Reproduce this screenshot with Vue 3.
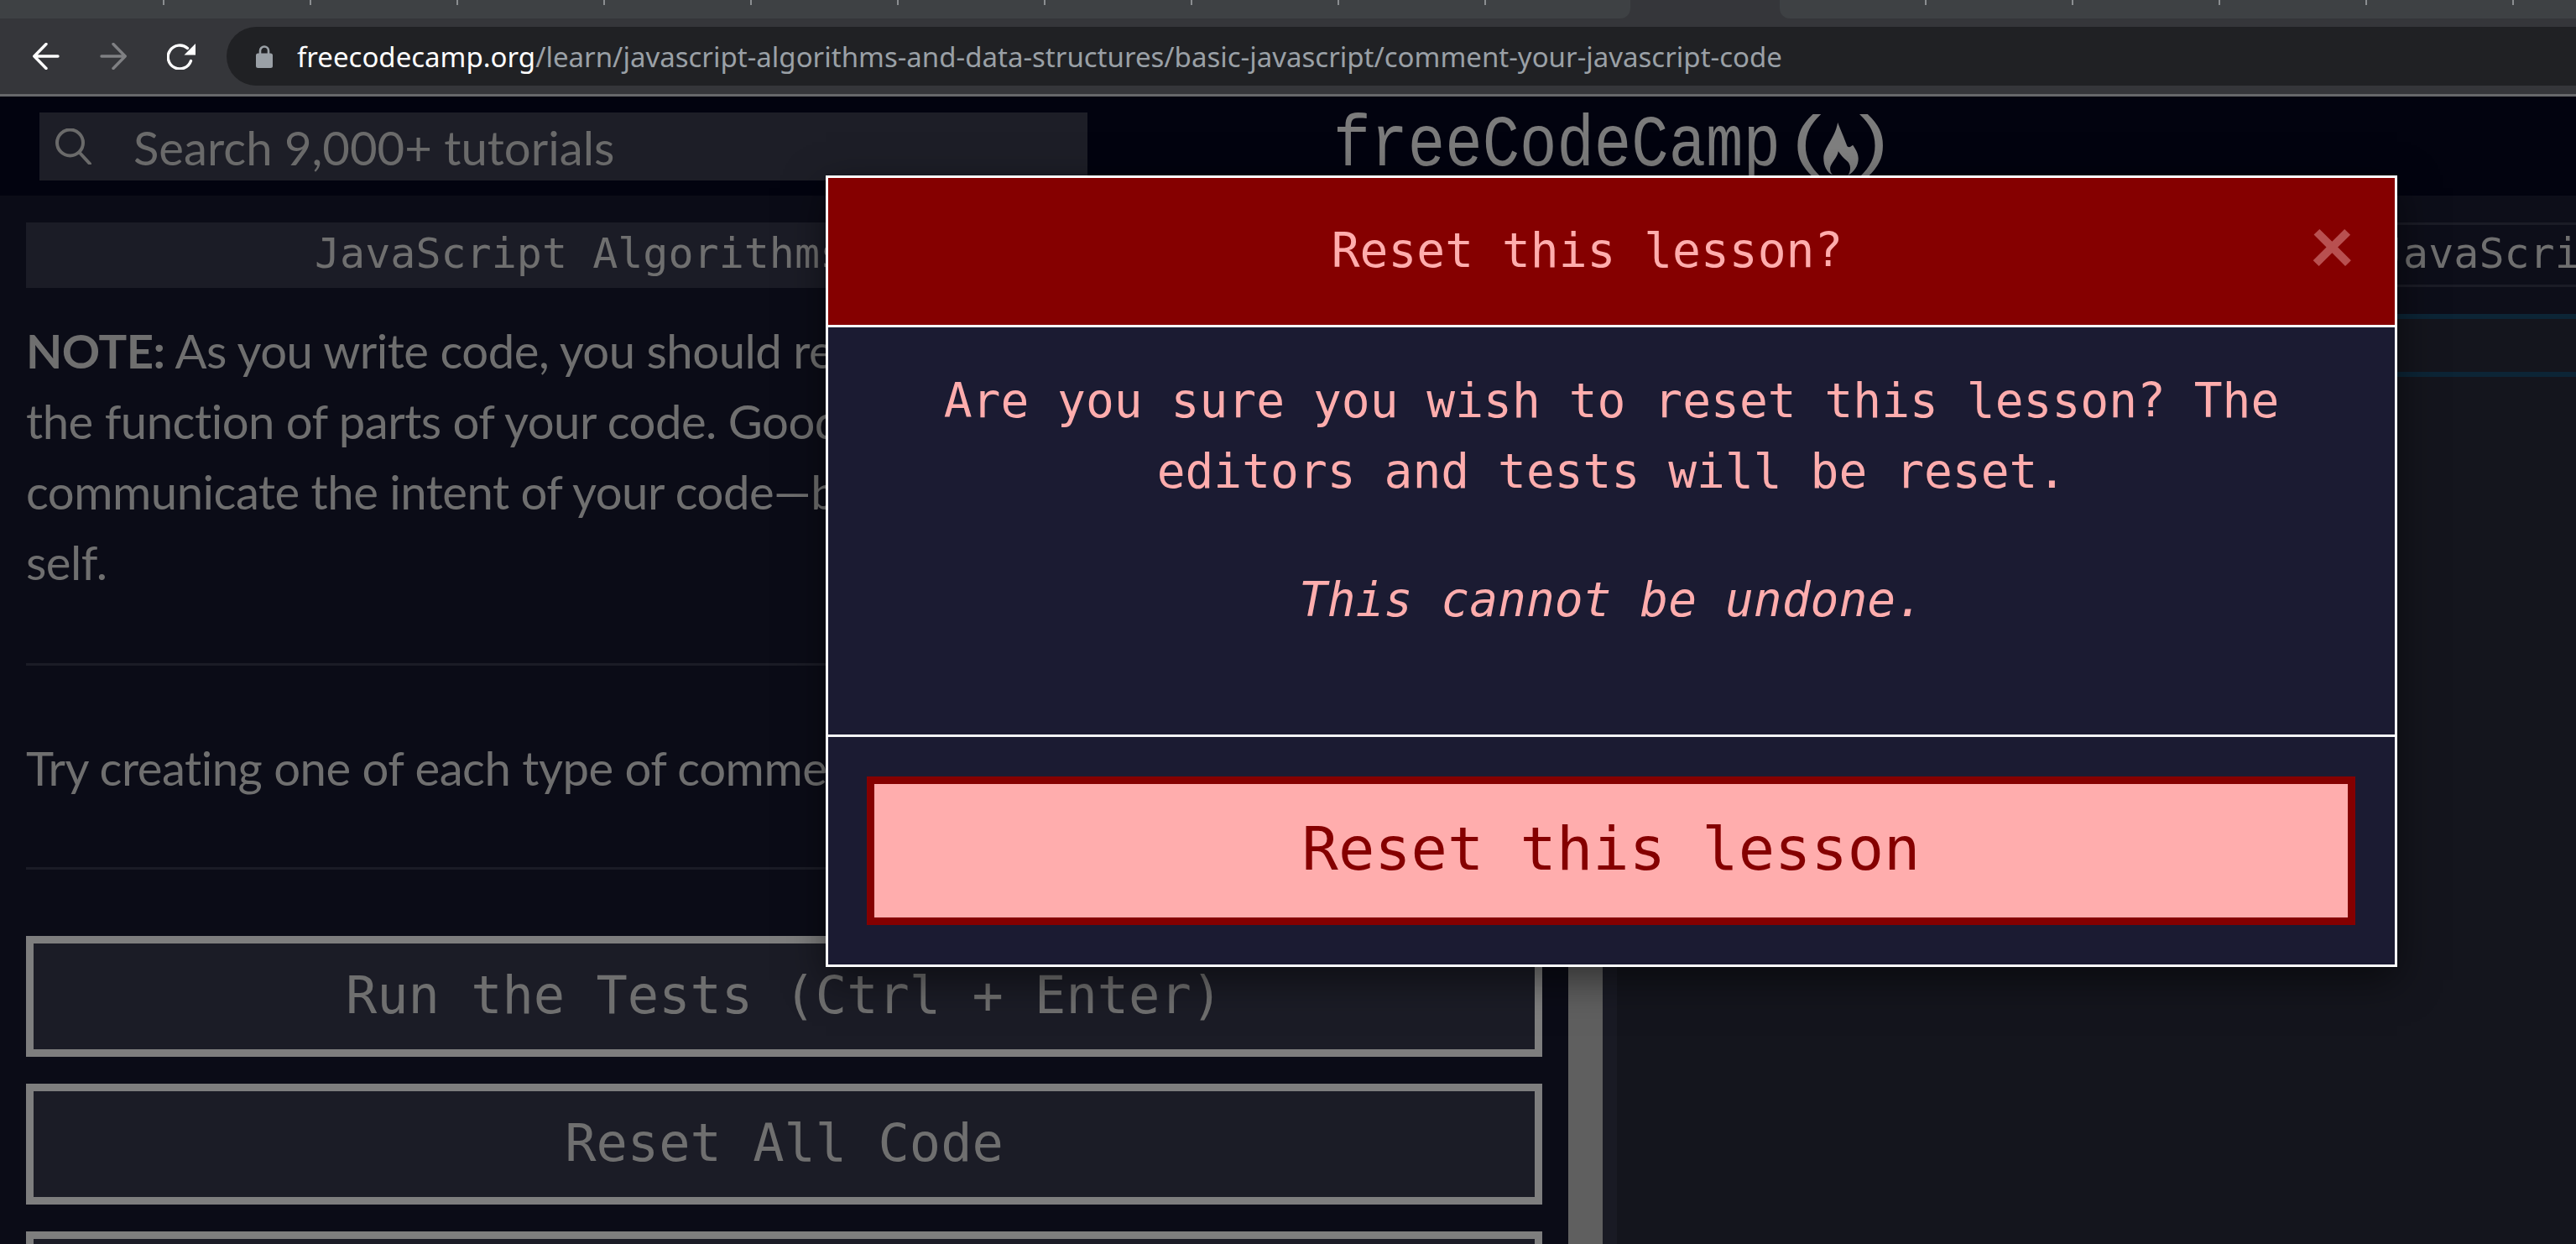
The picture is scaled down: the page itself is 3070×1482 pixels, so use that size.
<script setup>
const tabGroups = [
  { id: 'left', tabs: 11 },
  { id: 'right', tabs: 6 },
]
</script>

<template>
  <div class="screen">
    <!-- browser chrome -->
    <div class="tabstrip">
      <div v-for="group in tabGroups" :key="group.id" :class="['tab-group', group.id]">
        <span v-for="n in group.tabs" :key="n" class="tab"></span>
      </div>
    </div>
    <div class="toolbar">
      <svg class="nav-icon" width="32" height="32" viewBox="0 0 32 32" fill="none" stroke="#fff" stroke-width="3.4" stroke-linecap="round" stroke-linejoin="round">
        <path d="M16 1.5 1.8 16 16 30.5M2 16h28" />
      </svg>
      <svg class="nav-icon" width="32" height="32" viewBox="0 0 32 32" fill="none" stroke="#7f8083" stroke-width="3.4" stroke-linecap="round" stroke-linejoin="round">
        <path d="M16 1.5 30.2 16 16 30.5M30 16H2" />
      </svg>
      <svg class="nav-icon reload" width="34" height="32" viewBox="0 0 34 32">
        <path d="M28.5 21.5A14 14 0 1 1 24.5 6.5" fill="none" stroke="#fff" stroke-width="3.4" stroke-linecap="round" />
        <path d="M34 1v13.5H20.5z" fill="#fff" />
      </svg>
      <div class="address">
        <svg class="lock" width="20" height="27" viewBox="0 0 20 27">
          <path d="M5 11V6.5a5 5 0 0 1 10 0V11" fill="none" stroke="#9aa0a6" stroke-width="2.6" />
          <rect y="9.5" width="20" height="17.5" rx="2.5" fill="#9aa0a6" />
        </svg>
        <span class="url"><span class="host">freecodecamp.org</span>/learn/javascript-algorithms-and-data-structures/basic-javascript/comment-your-javascript-code</span>
      </div>
    </div>
    <div class="chrome-line"></div>

    <!-- freeCodeCamp nav -->
    <header class="nav">
      <div class="search">
        <svg width="43" height="43" viewBox="0 0 43 43" fill="none" stroke="#6a6a6a" stroke-width="4" stroke-linecap="round">
          <circle cx="17.5" cy="17" r="15.5" />
          <path d="M29 29 41 42" />
        </svg>
        <span class="placeholder">Search 9,000+ tutorials</span>
      </div>
      <div class="logo">
        <span class="logo-word">freeCodeCamp</span>
        <span class="paren open">(</span>
        <svg class="flame" width="42" height="63" viewBox="0 0 125 190">
          <path fill="#7f7f7f" d="M51 0C62 28 72 50 85 85C92 92 100 86 105 81C118 100 125 115 125 130C125 155 110 178 88 190C100 170 98 150 84 138C72 128 64 118 53 103C50 125 30 140 24 160C22 172 26 182 33 188C12 180 0 155 0 128C0 90 40 60 51 0Z" />
        </svg>
        <span class="paren close">)</span>
      </div>
    </header>

    <main class="workspace">
      <section class="lesson">
        <h2 class="lesson-title">JavaScript Algorithms and Data Struct</h2>
        <p class="lesson-text">
          <strong>NOTE:</strong> As you write code, you should regularly add comments to clarify<br />
          the function of parts of your code. Good commenting can help<br />
          communicate the intent of your code—both for others and for your future<br />
          self.
        </p>
        <hr class="rule" />
        <p class="lesson-text second">Try creating one of each type of comment.</p>
        <hr class="rule" />
        <button class="lesson-btn">Run the Tests (Ctrl + Enter)</button>
        <button class="lesson-btn">Reset All Code</button>
        <button class="lesson-btn">Get Help</button>
      </section>
      <div class="splitter"><span class="handle"></span></div>
      <section class="editor">
        <div class="editor-head">
          <div class="editor-tab">JavaScript</div>
        </div>
        <div class="code-line"></div>
      </section>
    </main>

    <!-- reset dialog -->
    <div class="modal">
      <div class="modal-head">
        <h3 class="modal-title">Reset this lesson?</h3>
        <span class="close-x">×</span>
      </div>
      <div class="modal-body">
        <p>Are you sure you wish to reset this lesson? The<br />editors and tests will be reset.</p>
        <p class="warn"><em>This cannot be undone.</em></p>
      </div>
      <div class="modal-foot">
        <button class="reset-btn">Reset this lesson</button>
      </div>
    </div>
  </div>
</template>

<style>
html, body {
  margin: 0;
  background: #0b0c17;
  overflow: hidden;
}
</style>

<style scoped>
.screen {
  position: relative;
  width: 3070px;
  height: 1482px;
  overflow: hidden;
  display: flex;
  flex-direction: column;
  background: #0b0c17;
}

/* Tab strip */
.tabstrip {
  height: 22px;
  display: flex;
  background: #35363a;
  flex-shrink: 0;
}
.tab-group {
  display: flex;
  height: 22px;
  background: #3e4144;
}
.tab-group.left {
  width: 1943px;
  border-bottom-right-radius: 12px;
}
.tab-group.right {
  margin-left: 178px;
  width: 949px;
  border-bottom-left-radius: 12px;
}
.tab {
  position: relative;
  width: 175px;
  flex-shrink: 0;
}
.tab::after {
  content: '';
  position: absolute;
  right: 0;
  top: 0;
  width: 2px;
  height: 6px;
  background: #8b8e91;
}
.left .tab:first-child { width: 196px; }
.left .tab:last-child::after { display: none; }

/* Toolbar */
.toolbar {
  height: 90px;
  flex-shrink: 0;
  display: flex;
  align-items: flex-start;
  background: #35363a;
  padding: 10px 0 0 39px;
  box-sizing: border-box;
}
.nav-icon {
  margin: 19px 48px 0 0;
  flex-shrink: 0;
}
.reload { margin-right: 37px; }
.address {
  flex: 1;
  height: 70px;
  display: flex;
  align-items: center;
  background: #202124;
  border-radius: 35px 0 0 35px;
  padding-left: 35px;
}
.lock { flex-shrink: 0; margin-right: 29px; }
.url {
  font-family: "Noto Sans", sans-serif;
  font-size: 33px;
  color: #9aa0a6;
  white-space: nowrap;
}
.host { color: #fff; }
.chrome-line {
  height: 3px;
  flex-shrink: 0;
  background: #67686b;
}

/* Site nav */
.nav {
  height: 118px;
  flex-shrink: 0;
  display: flex;
  align-items: flex-start;
  background: #02030f;
  padding: 19px 0 0 47px;
  box-sizing: border-box;
}
.search {
  width: 1249px;
  height: 81px;
  display: flex;
  align-items: center;
  gap: 50px;
  padding-left: 19px;
  box-sizing: border-box;
  background: #1d1e27;
}
.placeholder {
  font-family: Lato, sans-serif;
  font-size: 56.25px;
  color: #6a6a6a;
  white-space: nowrap;
}
.logo {
  display: flex;
  align-items: center;
  margin-left: 293px;
  height: 116px;
  margin-top: -19px;
  font-family: "Liberation Mono", monospace;
  font-size: 74px;
  line-height: 1;
  color: #7b7b7b;
}
.logo-word {
  display: inline-block;
  transform: scaleY(1.18);
}
.paren {
  display: inline-block;
  width: 40px;
  text-align: center;
  font-size: 80px;
  transform: scaleX(1.3);
}
.paren.open { margin-left: 9px; }
.paren.close { margin-left: -12px; }
.flame { margin: 8px 2px 0 2px; }

/* Main panes */
.workspace {
  flex: 1;
  display: flex;
  min-height: 0;
}
.lesson {
  width: 1869px;
  padding: 32px 31px 0;
  box-sizing: border-box;
  background: #0b0c17;
  overflow: hidden;
}
.lesson-title {
  margin: 0;
  height: 78px;
  line-height: 74px;
  padding-left: 344px;
  background: #1b1c26;
  font-family: "DejaVu Sans Mono", monospace;
  font-size: 50px;
  font-weight: 400;
  color: #6f6f6f;
  white-space: nowrap;
  overflow: hidden;
}
.lesson-text {
  margin: 32px 0 0;
  font-family: Lato, sans-serif;
  font-size: 56.25px;
  line-height: 84px;
  letter-spacing: -0.5px;
  color: #6f6f6f;
  white-space: nowrap;
}
.lesson-text.second { margin-top: 79px; }
.rule {
  margin: 79px 0 0;
  height: 3px;
  border: 0;
  background: #1b1c26;
}
.second + .rule { margin-top: 77px; }
.lesson-btn {
  display: block;
  width: 100%;
  height: 144px;
  margin-bottom: 32px;
  padding: 0 0 4px;
  border: 9px solid #7e7e7e;
  background: #1b1c26;
  color: #6f6f6f;
  font-family: "DejaVu Sans Mono", monospace;
  font-size: 62px;
}
.rule + .lesson-btn { margin-top: 79px; }
.splitter {
  width: 58px;
  flex-shrink: 0;
  background: #191a24;
}
.handle {
  display: block;
  width: 41px;
  height: 100%;
  background: #5f5f5f;
}
.editor {
  flex: 1;
  min-width: 0;
  background: #14151d;
}
.editor-head {
  height: 141px;
  padding-top: 32px;
  box-sizing: border-box;
  background: #0d0e19;
}
.editor-tab {
  height: 77px;
  box-sizing: border-box;
  border-top: 3px solid #1b1c26;
  border-bottom: 3px solid #1b1c26;
  padding-left: 907px;
  line-height: 68px;
  font-family: "DejaVu Sans Mono", monospace;
  font-size: 50px;
  color: #6f6f6f;
  white-space: nowrap;
  overflow: hidden;
}
.code-line {
  height: 63px;
  border-top: 6px solid #0c2536;
  border-bottom: 6px solid #0c2536;
}

/* Modal */
.modal {
  position: absolute;
  left: 984px;
  top: 209px;
  width: 1873px;
  height: 943px;
  box-sizing: border-box;
  border: 3px solid #fff;
  background: #1b1b32;
  box-shadow: 0 15px 45px rgba(0, 0, 0, 0.5);
  display: flex;
  flex-direction: column;
  font-family: "DejaVu Sans Mono", monospace;
  color: #ffadad;
}
.modal-head {
  position: relative;
  height: 178px;
  flex-shrink: 0;
  box-sizing: border-box;
  border-bottom: 3px solid #f5f6f7;
  background: #850000;
  display: flex;
  align-items: center;
  justify-content: center;
  padding: 0 58px 3px 0;
}
.modal-title {
  margin: 0;
  font-size: 56.25px;
  font-weight: 400;
}
.close-x {
  position: absolute;
  left: 1765px;
  top: 31px;
  font-family: Lato, sans-serif;
  font-size: 94px;
  line-height: 94px;
  font-weight: 900;
  color: #b85050;
}
.modal-body {
  height: 488px;
  flex-shrink: 0;
  box-sizing: border-box;
  padding-top: 46px;
  border-bottom: 3px solid #f5f6f7;
  text-align: center;
  font-size: 56.25px;
  line-height: 84px;
}
.modal-body p { margin: 0; }
.modal-body .warn { margin-top: 69px; }
.modal-foot {
  flex: 1;
  padding: 47px 47px 0 46px;
}
.reset-btn {
  display: block;
  width: 100%;
  height: 177px;
  padding: 0 0 6px;
  border: 9px solid #850000;
  background: #ffadad;
  color: #850000;
  font-family: "DejaVu Sans Mono", monospace;
  font-size: 72px;
}
</style>
